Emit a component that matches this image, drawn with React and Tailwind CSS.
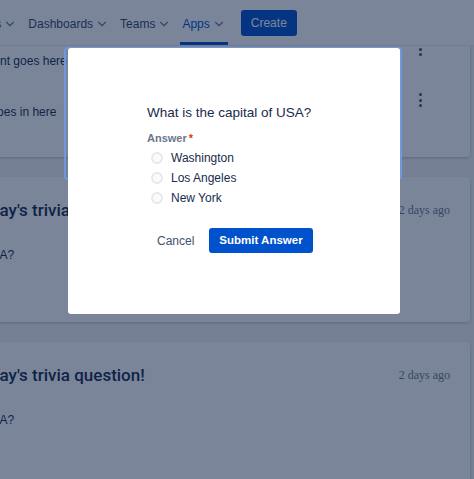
import { ChevronDown } from 'lucide-react'

function NavItem({ label, active }) {
    return (
        <div className={`h-full flex items-center gap-[2px] px-[2px] border-b-[3px] ${active ? 'border-[#0052cc] text-[#0052cc]' : 'border-transparent text-[#344563]'}`}>
            <span className="pt-[6px]">{label}</span>
            <ChevronDown size={14} strokeWidth={2} className="mt-[6px] text-[#6b778c]" />
        </div>
    )
}

function Dots() {
    return (
        <div className="flex flex-col gap-[2.5px]">
            <span className="w-[3px] h-[3px] rounded-full bg-[#42526e]" />
            <span className="w-[3px] h-[3px] rounded-full bg-[#42526e]" />
            <span className="w-[3px] h-[3px] rounded-full bg-[#42526e]" />
        </div>
    )
}

function TriviaCard() {
    return (
        <section className="-ml-[140px] mr-[4px] bg-white rounded-[3px] shadow-[0_1px_3px_rgba(9,30,66,0.25)] pl-[140px] pr-[20px] pt-[23px] pb-[60px]">
            <div className="flex items-center justify-between">
                <h3 className="-ml-[29px] text-[17px] leading-[20px] font-medium text-[#172b4d] font-['Roboto',sans-serif]">Today's trivia question!</h3>
                <span className="text-[12px] leading-[14px] text-[#6b778c] font-['Liberation_Serif',serif]">2 days ago</span>
            </div>
            <p className="-ml-[132px] mt-[28px] text-[12px] leading-[14px] text-[#172b4d]">What is the capital of USA?</p>
        </section>
    )
}

export default function App() {
    const options = ['Washington', 'Los Angeles', 'New York']
    return (
        <div className="relative w-[474px] h-[479px] overflow-hidden bg-[#f4f5f7] font-['Liberation_Sans',sans-serif]">
            <header className="relative z-10 h-[46px] bg-white border-b border-[#ebecf0] flex items-center text-[12px] font-medium">
                <nav className="h-full flex items-center gap-[7px] -ml-[44px]">
                    <NavItem label="Projects" />
                    <NavItem label="Dashboards" />
                    <NavItem label="Teams" />
                    <NavItem label="Apps" active />
                </nav>
                <button className="ml-[13px] mt-[1px] h-[26px] px-[10px] rounded-[3px] bg-[#0052cc] text-white text-[12px]">Create</button>
            </header>

            <main className="flex flex-col gap-[20px]">
                <section className="-mt-[4px] -ml-[140px] mr-[4px] bg-white rounded-[3px] shadow-[0_1px_3px_rgba(9,30,66,0.25)] pl-[140px] pr-[48px] pb-[13px] text-[12px] leading-[14px] text-[#172b4d]">
                    <div className="h-[51px] flex items-start justify-between">
                        <p className="-ml-[32px] mt-[12px]">Content goes here</p>
                        <Dots />
                    </div>
                    <div className="h-[51px] flex items-start justify-between">
                        <p className="-ml-[55px] mt-[12px]">Content goes in here</p>
                        <Dots />
                    </div>
                </section>
                <TriviaCard />
                <TriviaCard />
            </main>

            {/* blanket */}
            <div className="absolute inset-0 z-20 bg-[#091e42]/[0.54]" />
            <div className="absolute z-20 left-[64px] top-[47px] w-[338px] h-[133px] border-2 border-[#6e97dc] rounded-[4px]" />

            <div className="absolute z-30 left-[68px] top-[48px] w-[332px] h-[266px] bg-white rounded-[3px] pl-[79px] pt-[56px] text-[#172b4d]">
                <h2 className="text-[13.5px] leading-[18px]">What is the capital of USA?</h2>
                <div className="mt-[9px] text-[11px] leading-[14px] font-semibold text-[#6b778c]">
                    Answer<span className="ml-[2px] text-[#de350b]">*</span>
                </div>
                <div className="mt-[3px] flex flex-col">
                    {options.map((o) => (
                        <label key={o} className="h-[20px] flex items-center gap-[8px] text-[12px]">
                            <span className="ml-[4px] w-[12px] h-[12px] rounded-full border-2 border-[#e6e8ec] bg-[#fafbfc]" />
                            {o}
                        </label>
                    ))}
                </div>
                <div className="mt-[20px] flex items-center gap-[5px] text-[12px]">
                    <button className="h-[25px] px-[10px] text-[#42526e]">Cancel</button>
                    <button className="h-[25px] px-[10px] rounded-[3px] bg-[#0052cc] text-white text-[11.5px] font-semibold">Submit Answer</button>
                </div>
            </div>
        </div>
    )
}
